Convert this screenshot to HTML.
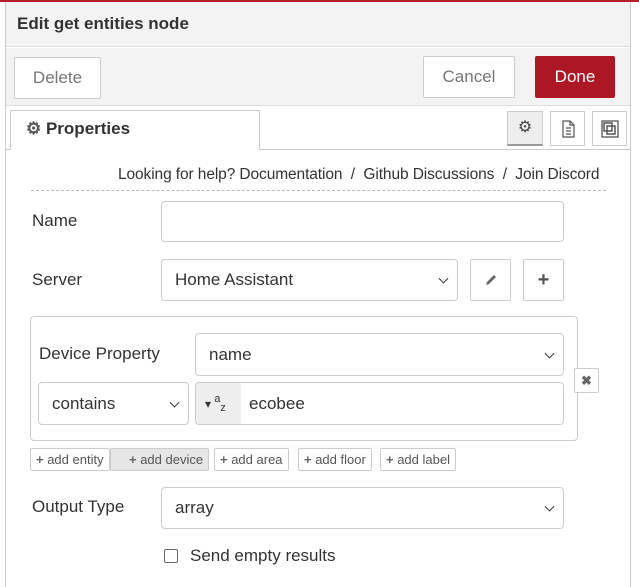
<!DOCTYPE html><html><head><style>
*{box-sizing:border-box}
body{margin:0;width:639px;height:587px;overflow:hidden;background:#fff;font-family:"Liberation Sans",sans-serif;color:#333;position:relative}
.a{position:absolute}
.btn{position:absolute;border:1px solid #ccc;background:#fff;border-radius:2px;font-size:17px;color:#777;display:flex;align-items:center;justify-content:center}
.inp{position:absolute;border:1px solid #ccc;border-radius:4px;background:#fff;font-size:17px;color:#333;display:flex;align-items:center;padding-left:13px}
.sel::after{content:"";position:absolute;right:10px;top:50%;width:6px;height:6px;border-right:1.5px solid #333;border-bottom:1.5px solid #333;transform:translateY(-70%) rotate(45deg)}
.lbl{position:absolute;font-size:17px;color:#333}
.sb{position:absolute;height:23px;border:1px solid #ccc;background:#fff;font-size:13px;color:#555;display:flex;align-items:center;padding:0 5px;border-radius:2px}
</style></head><body>
<div class="a" style="left:0;top:0;width:639px;height:2px;background:#b5202a"></div>
<div class="a" style="left:5px;top:2px;width:626px;height:585px;border-left:1px solid #ccc;border-right:1px solid #ccc;background:#fff"></div>
<div class="a" style="left:6px;top:2px;width:624px;height:45px;background:#f3f3f3;border-bottom:1px solid #ddd"></div>
<div class="a" style="left:17px;top:14px;font-size:17px;font-weight:bold;color:#333">Edit get entities node</div>
<div class="a" style="left:6px;top:48px;width:624px;height:58px;background:#f3f3f3;border-bottom:1px solid #ddd"></div>
<div class="btn" style="left:14px;top:57px;width:87px;height:42px">Delete</div>
<div class="btn" style="left:423px;top:56px;width:92px;height:42px">Cancel</div>
<div class="btn" style="left:535px;top:56px;width:80px;height:42px;background:#ad1625;border-color:#ad1625;color:#fff">Done</div>
<div class="a" style="left:6px;top:149px;width:624px;height:1px;background:#ccc"></div>
<div class="a" style="left:10px;top:110px;width:250px;height:40px;background:#fff;border:1px solid #ccc;border-bottom:none"></div>
<div class="a" style="left:26px;top:119px;font-size:17px;font-weight:bold;color:#333"><span style="color:#555">⚙</span> Properties</div>
<div class="a" style="left:507px;top:111px;width:36px;height:35px;background:#eee;border:1px solid #ccc;border-bottom:2px solid #999;font-size:16px;color:#444;text-align:center;line-height:32px">⚙</div>
<div class="a" style="left:550px;top:111px;width:35px;height:35px;border:1px solid #ccc;background:#fff"><svg width="35" height="35"><path d="M12 9h7l4 4v12H12z M19 9v4h4 M15 16h5M15 19h5M15 22h5" fill="none" stroke="#555" stroke-width="1.2"/></svg></div>
<div class="a" style="left:592px;top:111px;width:35px;height:35px;border:1px solid #ccc;background:#fff"><svg width="35" height="35"><rect x="9" y="9" width="16" height="16" fill="none" stroke="#555" stroke-width="1.3"/><rect x="11" y="11" width="8" height="8" fill="none" stroke="#555" stroke-width="1.5"/><rect x="14" y="14" width="8" height="8" fill="none" stroke="#555" stroke-width="1.5"/></svg></div>
<div class="a" style="left:118px;top:166px;font-size:15.5px;color:#333;white-space:nowrap;letter-spacing:-0.1px">Looking for help? Documentation &nbsp;/ &nbsp;Github Discussions &nbsp;/ &nbsp;Join Discord</div>
<div class="a" style="left:31px;top:190px;width:575px;border-top:1px dashed #bbb"></div>
<div class="lbl" style="left:32px;top:211px">Name</div>
<div class="inp" style="left:161px;top:201px;width:403px;height:41px"></div>
<div class="lbl" style="left:32px;top:270px">Server</div>
<div class="inp sel" style="left:161px;top:259px;width:297px;height:42px">Home Assistant</div>
<div class="btn" style="left:470px;top:259px;width:41px;height:42px;color:#555"><svg width="14" height="14"><path d="M2 12l1-3 7-7 2 2-7 7z" fill="#666"/></svg></div>
<div class="btn" style="left:523px;top:259px;width:41px;height:42px;color:#555;font-weight:bold;font-size:20px">+</div>
<div class="a" style="left:30px;top:316px;width:548px;height:125px;border:1px solid #ccc;border-radius:4px"></div>
<div class="lbl" style="left:39px;top:344px">Device Property</div>
<div class="inp sel" style="left:195px;top:333px;width:369px;height:43px">name</div>
<div class="inp sel" style="left:38px;top:382px;width:151px;height:43px">contains</div>
<div class="inp" style="left:195px;top:382px;width:369px;height:43px;padding-left:0;overflow:hidden"><div style="width:45px;height:100%;background:#eee;display:flex;align-items:center;font-size:12px;color:#333;padding-left:9px">▾&nbsp;<span style="font-size:13px;line-height:1"><sup>a</sup><sub>z</sub></span></div><span style="padding-left:8px">ecobee</span></div>
<div class="btn" style="left:574px;top:368px;width:25px;height:25px;color:#666;font-size:13px;font-weight:bold">✖</div>
<div class="sb" style="left:30px;top:448px"><b style="color:#666">+</b>&nbsp;add entity</div>
<div class="sb" style="left:110px;top:448px;background:#e6e6e6;padding-left:18px"><b style="color:#666">+</b>&nbsp;add device</div>
<div class="sb" style="left:214px;top:448px"><b style="color:#666">+</b>&nbsp;add area</div>
<div class="sb" style="left:298px;top:448px"><b style="color:#666">+</b>&nbsp;add floor</div>
<div class="sb" style="left:380px;top:448px"><b style="color:#666">+</b>&nbsp;add label</div>
<div class="lbl" style="left:32px;top:497px">Output Type</div>
<div class="inp sel" style="left:161px;top:487px;width:403px;height:42px">array</div>
<div class="a" style="left:164px;top:549px;width:14px;height:14px;border:1px solid #666;border-radius:2px"></div>
<div class="lbl" style="left:190px;top:546px">Send empty results</div>
</body></html>
